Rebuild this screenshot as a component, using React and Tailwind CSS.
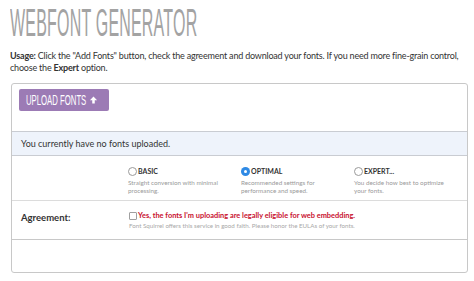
import React from 'react';

const options = [
  { id: 'basic', label: 'BASIC', desc: 'Straight conversion with minimal processing.' },
  { id: 'optimal', label: 'OPTIMAL', desc: 'Recommended settings for performance and speed.' },
  { id: 'expert', label: 'EXPERT...', desc: 'You decide how best to optimize your fonts.' },
];

function Radio({ checked }) {
  if (checked) {
    return (
      <span className="w-[9px] h-[9px] rounded-full bg-[#2f8ae5] flex items-center justify-center shrink-0">
        <span className="w-[3px] h-[3px] rounded-full bg-white" />
      </span>
    );
  }
  return <span className="w-[9px] h-[9px] rounded-full border border-[#9a9a9a] bg-white shrink-0" />;
}

export default function App() {
  const selected = 'optimal';

  return (
    <div className="w-[474px] h-[281px] bg-white overflow-hidden font-['Lato',sans-serif] text-[#333]">
      <div className="pl-[10px] pt-[3px] h-[40px]">
        <h1 className="inline-block origin-left scale-x-[0.41] text-[39px] leading-[40px] tracking-[0.5px] text-[#a3a3a3] font-['Liberation_Sans',sans-serif] font-normal whitespace-nowrap">
          WEBFONT GENERATOR
        </h1>
      </div>

      <div className="pl-[10px] text-[9px] leading-[12px] tracking-[-0.2px] mt-[10px] whitespace-nowrap">
        <p>
          <b className="font-bold">Usage:</b> Click the "Add Fonts" button, check the agreement and download your fonts. If you need more fine-grain control,
        </p>
        <p>
          choose the <b className="font-bold">Expert</b> option.
        </p>
      </div>

      <div className="ml-[11px] mt-[9px] w-[457px] h-[190px] border border-[#c8c8c8] rounded-[3px] flex flex-col">
        <div className="h-[47px] pl-[7px] pt-[5px]">
          <button className="w-[90px] h-[22px] bg-[#9c7bb5] rounded-[2px] flex items-center pl-[7px]">
            <span className="w-[63px] shrink-0 overflow-visible">
              <span className="block origin-left scale-x-[0.5] text-white text-[15.5px] leading-none font-['Liberation_Sans',sans-serif] whitespace-nowrap">
                UPLOAD FONTS
              </span>
            </span>
            <svg width="9" height="10" viewBox="0 0 10 10">
              <path d="M5 1 L9 5.2 H6.4 V9 H3.6 V5.2 H1 Z" fill="white" />
            </svg>
          </button>
        </div>

        <div className="h-[25px] bg-[#eef3fb] border-y border-[#c9ccd2] flex items-center pl-[9px] text-[9px]">
          You currently have no fonts uploaded.
        </div>

        <div className="h-[45px] border-b border-[#dcdcdc] flex pl-[116px] pt-[11px]">
          {options.map(o => (
            <div key={o.id} className="w-[114px]">
              <div className="flex items-center gap-[1px]">
                <Radio checked={o.id === selected} />
                <span className="text-[7px] font-bold text-[#333] leading-none">{o.label}</span>
              </div>
              <p className="text-[6.3px] leading-[7.5px] text-[#9a9a9a] mt-[3px] w-[100px]">{o.desc}</p>
            </div>
          ))}
        </div>

        <div className="h-[39px] border-b border-[#c8c8c8] flex pt-[11px]">
          <div className="w-[117px] pl-[9px] text-[9.5px] font-bold leading-[12px]">Agreement:</div>
          <div>
            <label className="flex items-center gap-[1px]">
              <span className="w-[8px] h-[8px] border border-[#a0a0a0] rounded-[1px] bg-white" />
              <span className="text-[7.4px] font-bold text-[#c8102e] leading-none">
                Yes, the fonts I'm uploading are legally eligible for web embedding.
              </span>
            </label>
            <p className="text-[6.2px] text-[#a8a8a8] mt-[3px] leading-none">
              Font Squirrel offers this service in good faith. Please honor the EULAs of your fonts.
            </p>
          </div>
        </div>

        <div className="flex-1" />
      </div>
    </div>
  );
}
